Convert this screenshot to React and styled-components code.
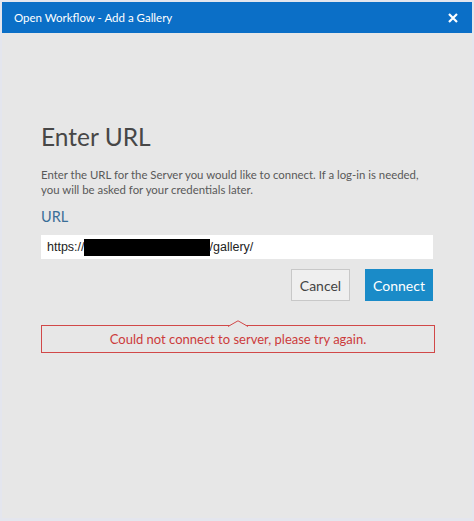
import styled, { createGlobalStyle } from "styled-components";

const GlobalStyle = createGlobalStyle`
  html, body {
    margin: 0;
    padding: 0;
    background: #e4e6ee;
  }
  #root {
    width: 474px;
    height: 521px;
  }
`;

const Dialog = styled.div`
  box-sizing: border-box;
  width: 474px;
  height: 521px;
  padding: 2px 2px 3px 2px;
  background: #e4e6ee;
  display: flex;
  flex-direction: column;
  font-family: Lato, "Noto Sans", sans-serif;
`;

const TitleBar = styled.div`
  height: 31px;
  flex: none;
  background: #0b6fc7;
  color: #fff;
  display: flex;
  align-items: center;
  justify-content: space-between;
  padding: 0 14px 0 12px;
  font-size: 11.5px;
`;

const CloseButton = styled.span`
  display: flex;
  align-items: center;
`;

const Body = styled.div`
  flex: 1;
  background: #e7e7e7;
  padding: 88px 39px 0 39px;
  display: flex;
  flex-direction: column;
`;

const Heading = styled.h1`
  margin: 0;
  font-weight: 400;
  font-size: 24.5px;
  line-height: 32px;
  color: #474747;
`;

const Description = styled.p`
  margin: 14px 0 0 0;
  font-size: 11.4px;
  line-height: 15px;
  color: #595959;
  white-space: nowrap;
`;

const Label = styled.div`
  margin-top: 10px;
  font-size: 14.5px;
  line-height: 19px;
  color: #3a6e97;
`;

const UrlField = styled.div`
  margin-top: 9px;
  height: 24px;
  background: #fff;
  display: flex;
  align-items: center;
  padding: 0 6px;
  font-family: "Liberation Sans", Arial, sans-serif;
  font-size: 12.5px;
  color: #222;
`;

const Redaction = styled.span`
  display: inline-block;
  width: 126px;
  height: 17px;
  background: #000;
  margin-left: -1px;
`;

const ButtonRow = styled.div`
  margin-top: 10px;
  display: flex;
  justify-content: flex-end;
  gap: 15px;
`;

const Button = styled.div`
  box-sizing: border-box;
  height: 32px;
  width: ${(p) => p.w}px;
  display: flex;
  align-items: center;
  justify-content: center;
  font-size: 14px;
  background: ${(p) => (p.primary ? "#1a8bc8" : "#efefef")};
  color: ${(p) => (p.primary ? "#fff" : "#444")};
  border: 1px solid ${(p) => (p.primary ? "#1a8bc8" : "#c8c8c8")};
`;

const ErrorBox = styled.div`
  position: relative;
  box-sizing: border-box;
  margin-top: 24px;
  height: 28px;
  width: 394px;
  border: 1px solid #d14848;
  display: flex;
  align-items: center;
  justify-content: center;
  font-size: 13px;
  color: #cc3b3b;
`;

const Notch = styled.svg`
  position: absolute;
  top: -6px;
  left: 186px;
`;

export default function App() {
  return (
    <>
      <GlobalStyle />
      <Dialog>
        <TitleBar>
          <span>Open Workflow - Add a Gallery</span>
          <CloseButton>
            <svg width="10" height="10" viewBox="0 0 10 10">
              <path d="M1 1 L9 9 M9 1 L1 9" stroke="#fff" strokeWidth="2.2" />
            </svg>
          </CloseButton>
        </TitleBar>
        <Body>
          <Heading>Enter URL</Heading>
          <Description>
            Enter the URL for the Server you would like to connect. If a log-in is needed,
            <br />
            you will be asked for your credentials later.
          </Description>
          <Label>URL</Label>
          <UrlField>
            https://
            <Redaction />
            /gallery/
          </UrlField>
          <ButtonRow>
            <Button w={59}>Cancel</Button>
            <Button w={68} primary>
              Connect
            </Button>
          </ButtonRow>
          <ErrorBox>
            <Notch width="20" height="7" viewBox="0 0 20 7">
              <path d="M0 6.5 L10 0.8 L20 6.5" fill="#e7e7e7" stroke="#d14848" strokeWidth="1" />
            </Notch>
            Could not connect to server, please try again.
          </ErrorBox>
        </Body>
      </Dialog>
    </>
  );
}
